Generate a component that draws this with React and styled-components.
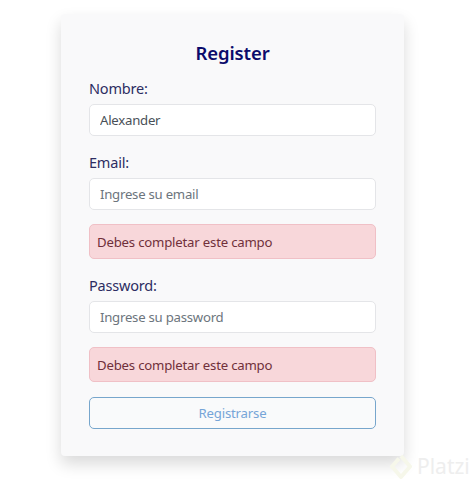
import styled, { createGlobalStyle } from "styled-components";

const GlobalStyle = createGlobalStyle`
  html, body {
    margin: 0;
    background: #fff;
  }
  body {
    font-family: "Noto Sans", "Open Sans", sans-serif;
  }
`;

const Page = styled.div`
  position: relative;
  width: 474px;
  height: 485px;
  overflow: hidden;
  padding: 14px 0 0 61px;
  box-sizing: border-box;
`;

const Card = styled.form`
  width: 343px;
  height: 442px;
  box-sizing: border-box;
  padding: 25px 28px 0;
  background: #f9f9fa;
  border-radius: 4px;
  box-shadow: 0 8px 16px rgba(0, 0, 0, 0.15);
  display: flex;
  flex-direction: column;
`;

const Title = styled.h1`
  margin: 0 0 12px;
  font-size: 18.5px;
  line-height: 28px;
  font-weight: 600;
  letter-spacing: -0.1px;
  text-align: center;
  color: #0b0b6b;
`;

const Label = styled.label`
  display: block;
  font-size: 14.5px;
  line-height: 18px;
  letter-spacing: -0.2px;
  margin-bottom: 7px;
  color: #2d2d62;
`;

const Input = styled.input`
  display: block;
  width: 100%;
  height: 32px;
  box-sizing: border-box;
  padding: 0 10px;
  font: inherit;
  font-size: 13.2px;
  letter-spacing: -0.25px;
  color: #495057;
  background: #fff;
  border: 1px solid #e4e5e8;
  border-radius: 5px;

  &::placeholder {
    color: #6c757d;
    opacity: 1;
  }
`;

const Field = styled.div`
  margin-bottom: ${(props) => props.$gap}px;
`;

const Alert = styled.div`
  height: 35px;
  box-sizing: border-box;
  margin-bottom: ${(props) => props.$gap}px;
  padding: 0 7px;
  display: flex;
  align-items: center;
  font-size: 13.2px;
  letter-spacing: -0.2px;
  color: #70303a;
  background: #f8d7da;
  border: 1px solid #f0c0c6;
  border-radius: 5px;
`;

const SubmitButton = styled.button`
  display: block;
  width: 100%;
  height: 32px;
  font: inherit;
  font-size: 13.2px;
  letter-spacing: -0.2px;
  color: #76a5d8;
  background: #f9fafb;
  border: 1px solid #77a6cc;
  border-radius: 5px;
`;

const Watermark = styled.div`
  position: absolute;
  left: 390px;
  top: 453px;
  display: flex;
  align-items: center;
  gap: 5px;
  font-size: 21px;
  line-height: 27px;
  color: #eeeeee;
`;

const App = () => {
  return (
    <>
      <GlobalStyle />
      <Page>
        <Card>
          <Title>Register</Title>
          <Field $gap={17}>
            <Label>Nombre:</Label>
            <Input defaultValue="Alexander" />
          </Field>
          <Field $gap={14}>
            <Label>Email:</Label>
            <Input placeholder="Ingrese su email" />
          </Field>
          <Alert $gap={17}>Debes completar este campo</Alert>
          <Field $gap={14}>
            <Label>Password:</Label>
            <Input placeholder="Ingrese su password" />
          </Field>
          <Alert $gap={15}>Debes completar este campo</Alert>
          <SubmitButton type="button">Registrarse</SubmitButton>
        </Card>
        <Watermark>
          <svg width="22" height="27" viewBox="0 0 22 27" fill="none">
            <path
              d="M11 3 L20 13.5 L11 24 L2 13.5 L9 5.5"
              stroke="#f6f7ea"
              strokeWidth="4"
              strokeLinejoin="round"
            />
          </svg>
          Platzi
        </Watermark>
      </Page>
    </>
  );
};

export default App;
